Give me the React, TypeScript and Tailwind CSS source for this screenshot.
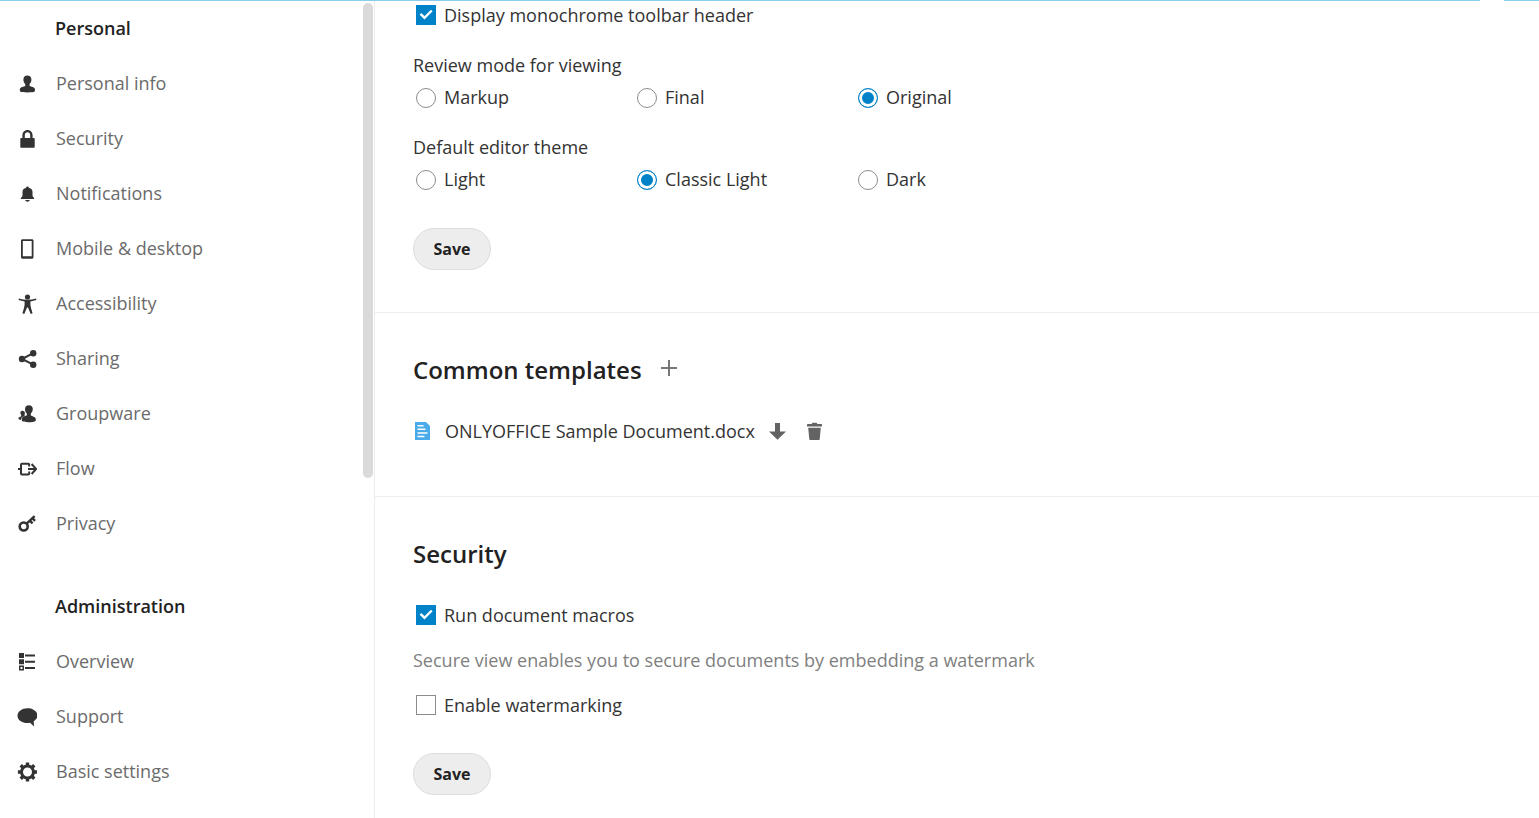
import { ReactNode } from 'react';

interface NavItem {
  label: string;
  icon: ReactNode;
}

interface RadioGroupProps {
  legend: string;
  name: string;
  options: string[];
  selected: string;
}

const shareIcon = (
  <>
    <circle cx="5" cy="10" r="3.200" />
    <circle cx="16.200" cy="4.200" r="3.200" />
    <circle cx="16.200" cy="15.700" r="3.200" />
    <path d="M16.200 4.200 5 10l11.200 5.700" fill="none" stroke="currentColor" strokeWidth="2" />
  </>
);

const PERSONAL: NavItem[] = [
  {
    label: 'Personal info',
    icon: (
      <path d="M10.400 1.600c-2.400 0-4 1.600-4 3.800 0 2 .7 3.400 1.600 4.400.4.500.4 1.400.2 2.100C5.300 12.700 2.800 13.600 2.800 15.200c0 1 .1 1.800.4 2.400.9 1.200 13.500 1.200 14.400 0 .3-.6.4-1.400.4-2.400 0-1.600-2.500-2.500-5.400-3.300-.2-.7-.2-1.600.2-2.100.9-1 1.600-2.400 1.600-4.400 0-2.200-1.600-3.800-4-3.800z" />
    ),
  },
  {
    label: 'Security',
    icon: (
      <path
        fillRule="evenodd"
        d="M10.500 1C7.600 1 5.400 3.300 5.400 6.300V9H4.100c-.4 0-.8.400-.8.800V18c0 .4.400.7.800.7h12.800c.4 0 .8-.3.800-.7V9.800c0-.4-.4-.8-.8-.8h-1.300V6.300c0-3-2.200-5.300-5.100-5.300zm0 2.300c1.700 0 2.700 1.300 2.700 3V9H7.800V6.300c0-1.700 1-3 2.700-3z"
      />
    ),
  },
  {
    label: 'Notifications',
    icon: (
      <path d="M10.500 2.500c-.8 0-1.300.5-1.300 1.200C6.500 4.300 5.500 6 5.500 8v3.200c0 1.300-.7 1.800-1.500 2.600-.5.5-.3 1.200.3 1.200h12.400c.6 0 .8-.7.300-1.200-.8-.8-1.500-1.300-1.500-2.600V8c0-2-1-3.700-3.700-4.300 0-.7-.5-1.200-1.300-1.200zM8.200 16c.3 1.100 1.200 1.700 2.300 1.700s2-.6 2.300-1.700z" />
    ),
  },
  {
    label: 'Mobile & desktop',
    icon: (
      <path
        fillRule="evenodd"
        d="M5.500.2C4.700.2 4 .8 4 1.600v16.700c0 .8.700 1.500 1.500 1.500H15c.8 0 1.500-.7 1.500-1.500V1.600c0-.8-.7-1.400-1.500-1.400zM5.800 2h8.900v15.200H5.800z"
      />
    ),
  },
  {
    label: 'Accessibility',
    icon: (
      <>
        <circle cx="10.500" cy="3" r="2.600" />
        <path d="M1.900 4.600c2.700.8 5.500 1.200 8.600 1.200s5.900-.4 8.600-1.200l.3 1.500c-2 .6-3.900 1-6 1.300-.2 2.300 0 4.400.6 6.500l1.600 5.400-1.900.6-2.700-6.300h-1l-2.700 6.300-1.900-.6L7 13.900c.6-2.100.8-4.200.6-6.500-2.100-.3-4-.7-6-1.300z" />
      </>
    ),
  },
  { label: 'Sharing', icon: shareIcon },
  {
    label: 'Groupware',
    icon: (
      <>
        <path d="M11.900 1.200c-2.300 0-3.900 1.600-3.900 3.900 0 1.900.6 3.100 1.500 4.100.4.500.4 1.500.2 2.200-2.200.7-5 1.700-5 3.200 0 1.100.1 1.900.4 2.500 1 1.600 12 1.600 13.400-.2.300-.4.300-1.200.3-2 0-1.600-2.700-2.600-4.900-3.400-.2-.7-.2-1.800.2-2.300.9-1 1.700-2.200 1.700-4.100 0-2.300-1.600-3.900-3.900-3.900z" />
        <path d="M5.500 6.800c-1.300 0-2.100.9-2.100 2 0 1 .3 1.700.8 2.200v1.600c-1.600.4-2.700.8-2.700 1.600 0 .6.100 1.100.5 1.400.4.200 1 .3 1.700.3.100-1.900 1.900-3.200 4.200-4-.4-.5-.6-.8-.3-1.300.2-.5.300-1 .3-1.600 0-1.200-1-2.200-2.400-2.200z" />
      </>
    ),
  },
  {
    label: 'Flow',
    icon: (
      <path
        d="M1 10h3M12.200 7.500V5.700c0-.6-.4-1-1-1H5c-.6 0-1 .4-1 1v8.900c0 .6.400 1 1 1h6.200c.6 0 1-.4 1-1v-2.100M11 10h8M14.600 5l4.600 5-4.600 5"
        fill="none"
        stroke="currentColor"
        strokeWidth="2"
      />
    ),
  },
  {
    label: 'Privacy',
    icon: (
      <>
        <circle cx="6.700" cy="12.500" r="4" fill="none" stroke="currentColor" strokeWidth="2.600" />
        <path
          d="m9.600 9.600 8-7.400M13 6.800l2.600 2.600M15.500 4.300l2.600 2.500"
          fill="none"
          stroke="currentColor"
          strokeWidth="2.400"
        />
      </>
    ),
  },
];

const ADMINISTRATION: NavItem[] = [
  {
    label: 'Overview',
    icon: (
      <path
        fillRule="evenodd"
        d="M2 1h5v5H2zM8 2.500h10v2H8zM2 7.200h5v5H2zM8 8.700h10v2H8zM2 13.500h5v5H2zm1.500 1.500v2h2v-2zM8 15h10v2H8z"
      />
    ),
  },
  {
    label: 'Support',
    icon: (
      <path d="M10.500 1.300C4.900 1.300.5 4.500.5 8.700s4.400 7.300 10 7.300c.9 0 1.700-.1 2.600-.2l3.900 3.700-.3-5.300c2.300-1.300 3.800-3.300 3.800-5.500 0-4.200-4.400-7.400-10-7.400z" />
    ),
  },
  {
    label: 'Basic settings',
    icon: (
      <>
        <circle cx="10.500" cy="10" r="6" fill="none" stroke="currentColor" strokeWidth="3" />
        <path
          d="M10.500.4v3.200M10.500 16.400v3.200M.9 10h3.200M16.900 10h3.200M3.700 3.200 6 5.500M15 14.500l2.300 2.300M3.700 16.800 6 14.500M15 5.500l2.300-2.300"
          stroke="currentColor"
          strokeWidth="3.400"
        />
      </>
    ),
  },
];

function NavIcon({ children }: { children: ReactNode }) {
  return (
    <svg
      className="h-5 w-5 shrink-0 text-[#333333]"
      viewBox="0 0 20 20"
      fill="currentColor"
      aria-hidden="true"
    >
      {children}
    </svg>
  );
}

function NavSection({ title, items }: { title: string; items: NavItem[] }) {
  return (
    <section>
      <h2 className="flex h-[55px] items-center pl-[55px] text-[18px] font-semibold text-[#222222]">
        {title}
      </h2>
      <ul>
        {items.map((item) => (
          <li key={item.label}>
            <a href="#" className="flex h-[55px] items-center gap-[19px] pl-[17px] text-[#6b6b6b]">
              <NavIcon>{item.icon}</NavIcon>
              {item.label}
            </a>
          </li>
        ))}
      </ul>
    </section>
  );
}

function Checkbox({ label, checked = false }: { label: string; checked?: boolean }) {
  return (
    <label className="flex h-8 w-fit items-center gap-2 pl-[3px]">
      <span className="grid h-5 w-5 place-items-center">
        <input
          type="checkbox"
          defaultChecked={checked}
          className="peer col-start-1 row-start-1 h-5 w-5 appearance-none border border-[#8c8c8c] bg-white checked:border-[#0082c9] checked:bg-[#0082c9]"
        />
        <svg
          className="pointer-events-none invisible col-start-1 row-start-1 h-5 w-5 peer-checked:visible"
          viewBox="0 0 20 20"
          fill="none"
          stroke="white"
          strokeWidth="2.400"
          aria-hidden="true"
        >
          <path d="m4.500 8.800 4 4 7.300-7.300" />
        </svg>
      </span>
      {label}
    </label>
  );
}

function RadioGroup({ legend, name, options, selected }: RadioGroupProps) {
  return (
    <fieldset>
      <legend className="flex h-8 items-center">{legend}</legend>
      <div className="flex h-[33px] items-center pl-[3px]">
        {options.map((option) => (
          <label key={option} className="flex w-[221px] items-center gap-2">
            <input
              type="radio"
              name={name}
              defaultChecked={option === selected}
              className="h-5 w-5 appearance-none rounded-full border border-[#8c8c8c] bg-white checked:border-[#0082c9] checked:bg-[#0082c9] checked:shadow-[inset_0_0_0_3px_white]"
            />
            {option}
          </label>
        ))}
      </div>
    </fieldset>
  );
}

function SaveButton() {
  return (
    <button
      type="button"
      className="h-[42px] w-[78px] rounded-full border border-[#dddddd] bg-[#ededed] text-[16px] font-bold text-[#222222]"
    >
      Save
    </button>
  );
}

export default function App() {
  return (
    <div className="flex h-screen flex-col overflow-hidden bg-white font-['Open_Sans',sans-serif] text-[18px] text-[#333333]">
      {/* Bottom edge of the app header */}
      <div className="flex h-px shrink-0">
        <div className="flex-1 bg-[#8acbf0]" />
        <div className="w-6" />
        <div className="w-[35px] bg-[#8acbf0]" />
      </div>

      <div className="flex min-h-0 flex-1">
        <aside className="flex w-[375px] shrink-0 justify-between overflow-hidden border-r border-[#ededed]">
          <nav className="flex-1">
            <NavSection title="Personal" items={PERSONAL} />
            <div className="mt-7">
              <NavSection title="Administration" items={ADMINISTRATION} />
            </div>
            <a href="#" aria-label="Sharing" className="flex h-[55px] items-center pl-[17px]">
              <NavIcon>{shareIcon}</NavIcon>
            </a>
          </nav>
          {/* Scrollbar thumb */}
          <div className="mt-0.5 mr-px h-[475px] w-2.5 rounded-full bg-[#dadada]" />
        </aside>

        <main className="min-w-0 flex-1 overflow-hidden">
          <section className="border-b border-[#ededed] px-[38px] pb-[42px]">
            <div className="-mt-0.5">
              <Checkbox label="Display monochrome toolbar header" checked />
            </div>
            <div className="mt-[18px] mb-8 flex flex-col gap-[17px]">
              <RadioGroup
                legend="Review mode for viewing"
                name="review-mode"
                options={['Markup', 'Final', 'Original']}
                selected="Original"
              />
              <RadioGroup
                legend="Default editor theme"
                name="editor-theme"
                options={['Light', 'Classic Light', 'Dark']}
                selected="Classic Light"
              />
            </div>
            <SaveButton />
          </section>

          <section className="border-b border-[#ededed] px-[38px] pt-[41px] pb-[49px]">
            <div className="flex h-8 items-center gap-[19px]">
              <h2 className="text-[24px] font-semibold text-[#222222]">Common templates</h2>
              <button type="button" aria-label="Add template" className="mb-1 text-[#777777]">
                <svg className="h-4 w-4" viewBox="0 0 16 16" stroke="currentColor" strokeWidth="2">
                  <path d="M8 0v16M0 8h16" />
                </svg>
              </button>
            </div>
            <div className="mt-[29px] flex h-8 items-center">
              <svg className="mr-3 h-5 w-5" viewBox="0 0 20 20" aria-hidden="true">
                <path d="M2 1h11l4 4v14H2z" fill="#49abea" />
                <path
                  d="M4.500 4.700h6M4.500 8.300h8M4.500 12h10M4.500 15.600h7"
                  stroke="white"
                  strokeWidth="1.500"
                />
              </svg>
              <a href="#">ONLYOFFICE Sample Document.docx</a>
              <button type="button" aria-label="Download" className="ml-3 text-[#636363]">
                <svg className="h-5 w-5" viewBox="0 0 20 20" fill="currentColor">
                  <path d="M8 2h5v8.500h6l-8.500 8.300L2 10.500h6z" />
                </svg>
              </button>
              <button type="button" aria-label="Delete" className="ml-[17px] text-[#636363]">
                <svg className="h-5 w-5" viewBox="0 0 20 20" fill="currentColor">
                  <path d="M8.500 1.700 7.500 3H4c-.6 0-1 .4-1 1v1.500h15V4c0-.6-.4-1-1-1h-3.500l-1-1.300zM4.200 6.700l1.100 11.500c0 .5.400.8.800.8h8.800c.4 0 .8-.3.800-.8l1.100-11.500z" />
                </svg>
              </button>
            </div>
          </section>

          <section className="px-[38px] pt-[41px]">
            <h2 className="flex h-8 items-center text-[24px] font-semibold text-[#222222]">
              Security
            </h2>
            <div className="mt-[29px] mb-8 flex flex-col gap-[13px]">
              <Checkbox label="Run document macros" checked />
              <p className="flex h-8 items-center text-[#808080]">
                Secure view enables you to secure documents by embedding a watermark
              </p>
              <Checkbox label="Enable watermarking" />
            </div>
            <SaveButton />
          </section>
        </main>
      </div>
    </div>
  );
}
